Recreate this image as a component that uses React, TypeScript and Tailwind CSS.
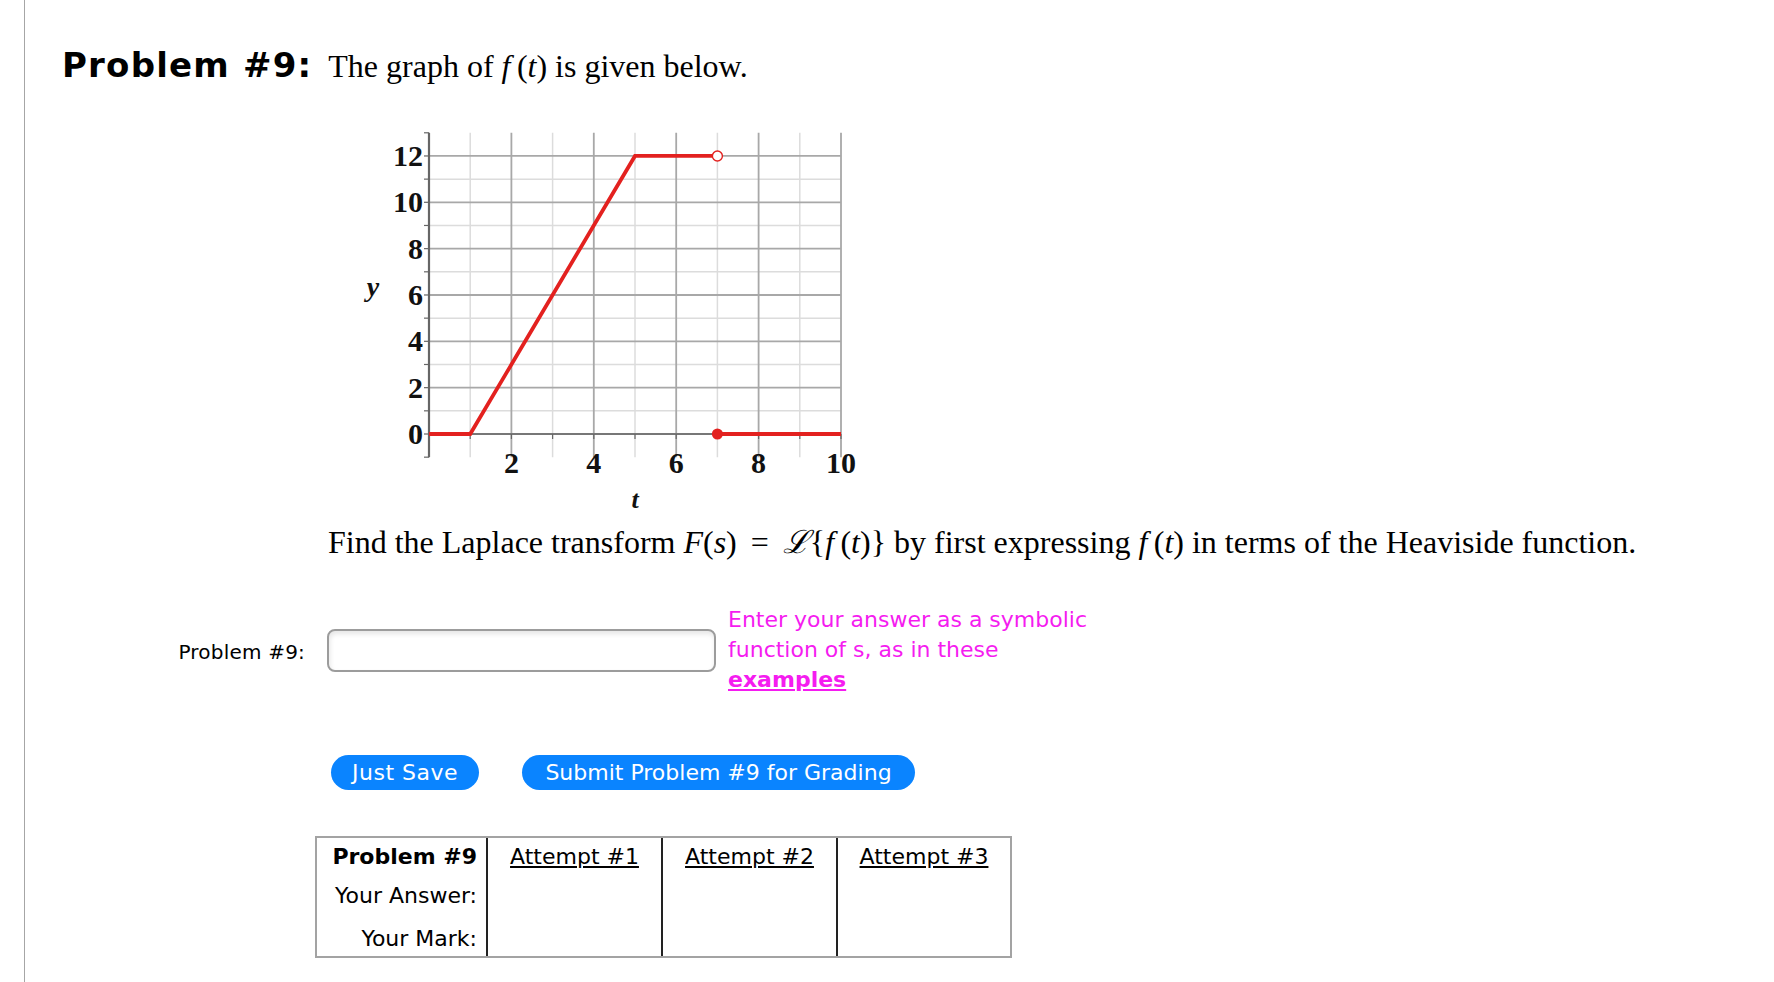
import React from 'react'

// plot geometry (svg coordinates)
const OX = 79
const OY = 314
const SX = 41.2
const SY = 23.17
const X = (t: number) => OX + SX * t
const Y = (v: number) => OY - SY * v

const RED = '#e3211f'

const Graph = () => {
  const ts = [1, 2, 3, 4, 5, 6, 7, 8, 9, 10]
  const vs = [1, 2, 3, 4, 5, 6, 7, 8, 9, 10, 11, 12]
  return (
    <svg width="520" height="395" viewBox="0 0 520 395" className="block">
      {/* minor grid first, then major on top */}
      {ts.filter(t => t % 2 === 1).map(t => (
        <line key={'vm' + t} x1={X(t)} x2={X(t)} y1={Y(13)} y2={Y(-1)} stroke="#dcdcdc" strokeWidth="1.5" />
      ))}
      {vs.filter(v => v % 2 === 1).map(v => (
        <line key={'hm' + v} x1={X(0)} x2={X(10)} y1={Y(v)} y2={Y(v)} stroke="#dcdcdc" strokeWidth="1.5" />
      ))}
      {ts.filter(t => t % 2 === 0).map(t => (
        <line key={'vM' + t} x1={X(t)} x2={X(t)} y1={Y(13)} y2={Y(-1)} stroke="#a8a8a8" strokeWidth="1.8" />
      ))}
      {vs.filter(v => v % 2 === 0).map(v => (
        <line key={'hM' + v} x1={X(0)} x2={X(10)} y1={Y(v)} y2={Y(v)} stroke="#a8a8a8" strokeWidth="1.8" />
      ))}
      {/* x axis at y = 0 */}
      <line x1={X(0)} x2={X(10)} y1={Y(0)} y2={Y(0)} stroke="#777" strokeWidth="1.8" />
      {ts.map(t => (
        <line key={'xt' + t} x1={X(t)} x2={X(t)} y1={Y(0)} y2={Y(0) + 5} stroke="#666" strokeWidth="1.2" />
      ))}
      {/* y axis */}
      <line x1={X(0)} x2={X(0)} y1={Y(13)} y2={Y(-1)} stroke="#666" strokeWidth="2.2" />
      {[-1, 0, 1, 2, 3, 4, 5, 6, 7, 8, 9, 10, 11, 12, 13].map(v => (
        <line key={'yt' + v} x1={X(0) - 5} x2={X(0)} y1={Y(v)} y2={Y(v)} stroke="#666" strokeWidth="1.2" />
      ))}

      {/* labels */}
      <g fontFamily="'Liberation Serif', serif" fontWeight="700" fontSize="30" fill="#111">
        {[0, 2, 4, 6, 8, 10, 12].map(v => (
          <text key={'yl' + v} x={X(0) - 6} y={Y(v) + 10} textAnchor="end">{v}</text>
        ))}
        {[2, 4, 6, 8, 10].map(t => (
          <text key={'xl' + t} x={X(t)} y={353} textAnchor="middle">{t}</text>
        ))}
        <text x={X(5)} y={388} textAnchor="middle" fontStyle="italic" fontSize="26">t</text>
        <text x={23} y={176} textAnchor="middle" fontStyle="italic" fontSize="28">y</text>
      </g>

      {/* f(t) */}
      <polyline
        points={`${X(0)},${Y(0)} ${X(1)},${Y(0)} ${X(5)},${Y(12)} ${X(7) - 5},${Y(12)}`}
        fill="none"
        stroke={RED}
        strokeWidth="3.8"
        strokeLinejoin="miter"
      />
      <circle cx={X(7)} cy={Y(12)} r="5" fill="white" stroke={RED} strokeWidth="1.4" />
      <line x1={X(7)} x2={X(10)} y1={Y(0)} y2={Y(0)} stroke={RED} strokeWidth="3.8" />
      <circle cx={X(7)} cy={Y(0)} r="5.5" fill={RED} />
    </svg>
  )
}

const App = () => {
  const serif = "font-['Liberation_Serif',serif]"
  const sans = "font-['DejaVu_Sans',Verdana,sans-serif]"
  return (
    <div className="min-h-screen bg-white text-black">
      <div className="ml-[24px] h-[982px] border-l border-[#a6a6a6] pl-[37px] pt-[45px]">
        {/* heading */}
        <div className="flex items-baseline leading-[40px]">
          <span className={`${sans} text-[34px] font-bold tracking-[1.2px]`}>Problem #9:</span>
          <span className={`${serif} ml-[16px] text-[32px]`}>
            The graph of <i>f</i>&thinsp;(<i>t</i>) is given below.
          </span>
        </div>

        {/* graph */}
        <div className="ml-[288px] mt-[34px]">
          <Graph />
        </div>

        {/* question */}
        <p className={`${serif} ml-[266px] mt-[7px] text-[32px] leading-[40px] whitespace-nowrap`}>
          Find the Laplace transform <i>F</i>(<i>s</i>)
          <span className="mx-[14px]">=</span>
          <span className="italic">ℒ</span>{'{'}<i>f</i>&thinsp;(<i>t</i>){'}'} by first expressing <i>f</i>&thinsp;(<i>t</i>) in terms of the Heaviside function.
        </p>

        {/* answer row */}
        <div className={`${sans} mt-[43px] flex items-center text-[20px]`}>
          <label className="w-[243px] text-right mt-[4px] tracking-[0.2px]">Problem #9:</label>
          <input
            type="text"
            className="ml-[22px] h-[43px] w-[389px] rounded-[8px] border-2 border-[#9c9c9c] bg-white shadow-[inset_1px_3px_5px_rgba(0,0,0,0.10)] outline-none"
          />
          <div className="ml-[12px] text-[22px] leading-[30px] text-[#f51cf0]">
            <div>Enter your answer as a symbolic</div>
            <div>function of s, as in these</div>
            <a href="#" className="font-bold underline">examples</a>
          </div>
        </div>

        {/* buttons */}
        <div className={`${sans} ml-[269px] mt-[60px] flex gap-[43px] text-[22px] text-white`}>
          <button className="h-[35px] w-[148px] rounded-full bg-[#0a84ff] tracking-[0.5px]">Just Save</button>
          <button className="h-[35px] w-[393px] rounded-full bg-[#0a84ff]">Submit Problem #9 for Grading</button>
        </div>

        {/* attempts table */}
        <div className={`${sans} ml-[253px] mt-[46px] flex w-[697px] border-2 border-[#a3a3a3] text-[22px]`}>
          <div className="flex w-[169px] flex-col pr-[9px] text-right">
            <div className="flex h-[36px] items-center justify-end font-bold">Problem #9</div>
            <div className="flex h-[43px] items-center justify-end">Your Answer:</div>
            <div className="flex h-[39px] items-center justify-end pt-[3px]">Your Mark:</div>
          </div>
          {['Attempt #1', 'Attempt #2', 'Attempt #3'].map((a, i) => (
            <div key={a} className={`${i === 2 ? 'w-[174px]' : 'w-[175px]'} border-l-2 border-[#222]`}>
              <div className="flex h-[36px] items-center justify-center">
                <a href="#" className="underline">{a}</a>
              </div>
            </div>
          ))}
        </div>
      </div>
    </div>
  )
}

export default App
